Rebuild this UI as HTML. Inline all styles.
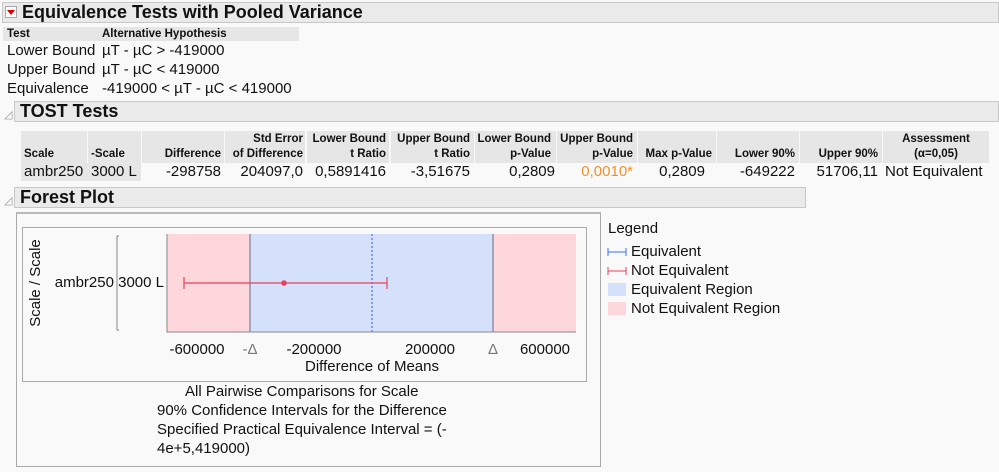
<!DOCTYPE html>
<html><head><meta charset="utf-8"><style>
body{margin:0;width:999px;height:472px;background:#f9f9f9;font-family:"Liberation Sans",Arial,sans-serif;position:relative;overflow:hidden;color:#111}
.a{position:absolute;white-space:nowrap}
.hdr{position:absolute;background:#eaeaea;border:1px solid #c8c8c8;height:21px;box-sizing:border-box}
.ht{position:absolute;font-weight:bold;font-size:18px;line-height:21px}
.th{font-weight:bold;font-size:11.5px;line-height:15px;text-align:right}
.td{font-size:15px;line-height:18px}
.hb{position:absolute;background:#e6e6e6;top:131px;height:32px}
</style></head><body>
<div class="hdr" style="left:2px;top:2px;width:997px"></div>
<div class="a" style="left:5px;top:6px;width:12px;height:12px;border:1px solid #aaa;background:#fff;box-sizing:border-box"></div>
<div class="a" style="left:7px;top:10px;width:0;height:0;border-left:4px solid transparent;border-right:4px solid transparent;border-top:5px solid #d00"></div>
<div class="ht" style="left:22px;top:2px">Equivalence Tests with Pooled Variance</div>
<div class="a" style="left:3px;top:27px;width:296px;height:14px;background:#e6e6e6"></div>
<div class="a th" style="left:7px;top:27px;font-size:11.5px;line-height:14px">Test</div>
<div class="a th" style="left:102px;top:27px;font-size:11.5px;line-height:14px">Alternative Hypothesis</div>
<div class="a td" style="left:7px;top:42px">Lower Bound</div><div class="a td" style="left:102px;top:42px">µT - µC &gt; -419000</div>
<div class="a td" style="left:7px;top:61px">Upper Bound</div><div class="a td" style="left:102px;top:61px">µT - µC &lt; 419000</div>
<div class="a td" style="left:7px;top:80px">Equivalence</div><div class="a td" style="left:102px;top:80px">-419000 &lt; µT - µC &lt; 419000</div>

<div class="hdr" style="left:14px;top:101px;width:985px"></div>
<div class="a" style="left:4px;top:108px;color:#999;font-size:11px">◿</div>
<div class="ht" style="left:20px;top:101px">TOST Tests</div>

<div class="hb" style="left:21px;width:66px"></div><div class="hb" style="left:88px;width:53px"></div>
<div class="hb" style="left:142px;width:82px"></div><div class="hb" style="left:225px;width:80px"></div>
<div class="hb" style="left:307px;width:82px"></div><div class="hb" style="left:391px;width:83px"></div>
<div class="hb" style="left:475px;width:81px"></div><div class="hb" style="left:557px;width:80px"></div>
<div class="hb" style="left:638px;width:78px"></div><div class="hb" style="left:717px;width:82px"></div>
<div class="hb" style="left:800px;width:82px"></div><div class="hb" style="left:883px;width:106px"></div>
<div class="a" style="left:21px;top:163px;width:120px;height:18px;background:#e6e6e6"></div>

<div class="a th" style="left:24px;top:147px;text-align:left">Scale</div>
<div class="a th" style="left:91px;top:147px;text-align:left">-Scale</div>
<div class="a th" style="right:778px;top:147px">Difference</div>
<div class="a th" style="right:696px;top:132px">Std Error<br>of Difference</div>
<div class="a th" style="right:613px;top:132px">Lower Bound<br>t Ratio</div>
<div class="a th" style="right:529px;top:132px">Upper Bound<br>t Ratio</div>
<div class="a th" style="right:448px;top:132px">Lower Bound<br>p-Value</div>
<div class="a th" style="right:366px;top:132px">Upper Bound<br>p-Value</div>
<div class="a th" style="right:287px;top:147px">Max p-Value</div>
<div class="a th" style="right:204px;top:147px">Lower 90%</div>
<div class="a th" style="right:121px;top:147px">Upper 90%</div>
<div class="a th" style="left:883px;width:106px;top:132px;text-align:center">Assessment<br>(α=0,05)</div>

<div class="a td" style="left:24px;top:163px">ambr250</div>
<div class="a td" style="left:91px;top:163px">3000 L</div>
<div class="a td" style="right:778px;top:163px">-298758</div>
<div class="a td" style="right:696px;top:163px">204097,0</div>
<div class="a td" style="right:613px;top:163px">0,5891416</div>
<div class="a td" style="right:529px;top:163px">-3,51675</div>
<div class="a td" style="right:444px;top:163px">0,2809</div>
<div class="a td" style="right:366px;top:163px;color:#f0902a">0,0010*</div>
<div class="a td" style="right:294px;top:163px">0,2809</div>
<div class="a td" style="right:204px;top:163px">-649222</div>
<div class="a td" style="right:121px;top:163px">51706,11</div>
<div class="a td" style="left:885px;top:163px">Not Equivalent</div>

<div class="hdr" style="left:14px;top:187px;width:792px"></div>
<div class="a" style="left:4px;top:194px;color:#999;font-size:11px">◿</div>
<div class="ht" style="left:20px;top:187px">Forest Plot</div>

<div class="a" style="left:16px;top:212px;width:585px;height:255px;border:1px solid #aaa;border-top:2px solid #bbb;box-sizing:border-box"></div>
<div class="a" style="left:22px;top:227px;width:565px;height:155px;border:1px solid #aaa;box-sizing:border-box"></div>

<svg class="a" style="left:0;top:0" width="999" height="472">
<rect x="167" y="234" width="83" height="98" fill="#fdd7dc"/>
<rect x="250" y="234" width="243" height="98" fill="#d5e1fb"/>
<rect x="493" y="234" width="83" height="98" fill="#fdd7dc"/>
<line x1="250" y1="234" x2="250" y2="332" stroke="#6a6a80"/>
<line x1="493" y1="234" x2="493" y2="332" stroke="#6a6a80"/>
<line x1="372" y1="234" x2="372" y2="332" stroke="#3355ee" stroke-dasharray="2,2"/>
<path d="M167 234V332H576" fill="none" stroke="#888"/>
<path d="M184 283H387M184 277V289M387 277V289" stroke="#e8405a" stroke-width="1.2" fill="none"/>
<circle cx="284" cy="283" r="2.8" fill="#e8405a"/>
<path d="M119 236H117V330H119" fill="none" stroke="#888"/>
<path d="M608 252H626M608 248V256M626 248V256" stroke="#3a6ef0" fill="none"/>
<path d="M608 271H626M608 267V275M626 267V275" stroke="#e8405a" fill="none"/>
<rect x="608" y="283" width="18" height="13" fill="#d5e1fb"/>
<rect x="608" y="302" width="18" height="13" fill="#fdd7dc"/>
</svg>
<div class="a td" style="top:283px;transform:translate(-50%,-50%) rotate(-90deg);transform-origin:center;left:36px">Scale / Scale</div>
<div class="a td" style="right:835px;top:274px">ambr250 3000 L</div>
<div class="a td" style="left:197px;top:341px;transform:translateX(-50%)">-600000</div>
<div class="a td" style="left:250px;top:341px;transform:translateX(-50%);color:#777">-Δ</div>
<div class="a td" style="left:314px;top:341px;transform:translateX(-50%)">-200000</div>
<div class="a td" style="left:430px;top:341px;transform:translateX(-50%)">200000</div>
<div class="a td" style="left:493px;top:341px;transform:translateX(-50%);color:#777">Δ</div>
<div class="a td" style="left:545px;top:341px;transform:translateX(-50%)">600000</div>
<div class="a td" style="left:372px;top:358px;transform:translateX(-50%)">Difference of Means</div>
<div class="a td" style="left:157px;top:382px;width:320px;line-height:19px;white-space:normal">
<div style="padding-left:28px">All Pairwise Comparisons for Scale</div>
<div>90% Confidence Intervals for the Difference</div>
<div>Specified Practical Equivalence Interval = (-</div>
<div>4e+5,419000)</div></div>
<div class="a td" style="left:608px;top:220px">Legend</div>
<div class="a td" style="left:631px;top:243px">Equivalent</div>
<div class="a td" style="left:631px;top:262px">Not Equivalent</div>
<div class="a td" style="left:631px;top:281px">Equivalent Region</div>
<div class="a td" style="left:631px;top:300px">Not Equivalent Region</div>
</body></html>
